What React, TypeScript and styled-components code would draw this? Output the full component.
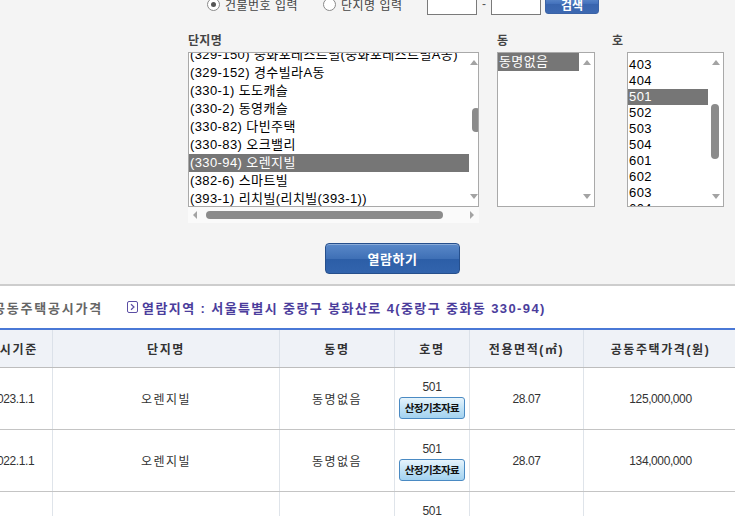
import React from 'react';
import styled, { createGlobalStyle } from 'styled-components';

const GlobalStyle = createGlobalStyle`
    html, body {
        margin: 0;
        padding: 0;
        background: #ffffff;
        overflow: hidden;
    }
    body {
        font-family: "Liberation Sans", "Noto Sans CJK KR", sans-serif;
        color: #333333;
    }
`;

const COLUMNS = '80px 227px 115px 75px 114px 154px';

const TopSection = styled.section`
    display: flex;
    flex-direction: column;
    background: #f4f4f4;
    border-bottom: 2px solid #cdcdcd;
    padding-bottom: 10px;
`;

const SearchRow = styled.div`
    display: flex;
    align-items: center;
    height: 22px;
    margin-top: -7px;
    padding-left: 207px;
`;

const RadioOption = styled.label<{ $width: number }>`
    display: flex;
    align-items: center;
    gap: 5px;
    width: ${p => p.$width}px;
    font-size: 12px;
    letter-spacing: 0.5px;
    color: #444444;
`;

const RadioMark = styled.span<{ $checked?: boolean }>`
    position: relative;
    width: 11px;
    height: 11px;
    border-radius: 50%;
    border: 1px solid #8a8a8a;
    background: #ffffff;

    &::after {
        content: '';
        display: ${p => (p.$checked ? 'block' : 'none')};
        position: absolute;
        left: 3px;
        top: 3px;
        width: 5px;
        height: 5px;
        border-radius: 50%;
        background: #555555;
    }
`;

const NumberInput = styled.input`
    width: 50px;
    height: 22px;
    box-sizing: border-box;
    border: 1px solid #7a7a7a;
    background: #ffffff;
    outline: none;
    padding: 0 3px;
`;

const Dash = styled.span`
    width: 14px;
    text-align: center;
    font-size: 12px;
    color: #555555;
`;

const SearchButton = styled.button`
    margin-left: 4px;
    width: 54px;
    height: 20px;
    border: 1px solid #3b63a6;
    border-radius: 3px;
    background: linear-gradient(#6d97d4, #4270bb 50%, #3864ae 51%, #3d69b2);
    color: #ffffff;
    font-family: inherit;
    font-size: 12px;
    font-weight: bold;
    padding: 0;
`;

const SelectArea = styled.div`
    display: flex;
    margin-top: 19px;
    padding-left: 188px;
`;

const SelectColumn = styled.div<{ $gap?: number }>`
    display: flex;
    flex-direction: column;
    margin-left: ${p => p.$gap ?? 0}px;
`;

const FieldLabel = styled.div`
    height: 14px;
    line-height: 14px;
    margin-bottom: 4px;
    font-size: 12px;
    font-weight: bold;
    letter-spacing: 0.3px;
    color: #444444;
`;

const ListBox = styled.div<{ $width: number; $indent?: number }>`
    display: flex;
    width: ${p => p.$width}px;
    height: 155px;
    margin-left: ${p => p.$indent ?? 0}px;
    box-sizing: border-box;
    border: 1px solid #a9a9a9;
    background: #ffffff;
    overflow: hidden;
`;

const ListItems = styled.div<{ $offset: number }>`
    flex: 1;
    min-width: 0;
    overflow: hidden;

    & > :first-child {
        margin-top: ${p => p.$offset}px;
    }
`;

const ListItem = styled.div<{ $height: number; $selected?: boolean }>`
    height: ${p => p.$height}px;
    line-height: ${p => p.$height}px;
    padding-left: 1px;
    font-size: 13px;
    letter-spacing: 0.4px;
    white-space: nowrap;
    color: ${p => (p.$selected ? '#ffffff' : '#000000')};
    background: ${p => (p.$selected ? '#767676' : 'transparent')};
`;

const VScroll = styled.div<{ $width: number }>`
    position: relative;
    display: flex;
    flex-direction: column;
    justify-content: space-between;
    align-items: center;
    width: ${p => p.$width}px;
    padding: 7px 0;
    box-sizing: border-box;
    background: #ffffff;
`;

const ArrowUp = styled.span`
    width: 0;
    height: 0;
    border-left: 4px solid transparent;
    border-right: 4px solid transparent;
    border-bottom: 5px solid #a3a3a3;
`;

const ArrowDown = styled.span`
    width: 0;
    height: 0;
    border-left: 4px solid transparent;
    border-right: 4px solid transparent;
    border-top: 5px solid #a3a3a3;
`;

const ScrollThumb = styled.span`
    position: absolute;
    border-radius: 4px;
    background: #8b8b8b;
`;

const HScroll = styled.div`
    position: relative;
    display: flex;
    justify-content: space-between;
    align-items: center;
    width: 291px;
    height: 16px;
    padding: 0 5px;
    box-sizing: border-box;
    background: #fafafa;
`;

const ArrowLeft = styled.span`
    width: 0;
    height: 0;
    border-top: 4px solid transparent;
    border-bottom: 4px solid transparent;
    border-right: 4px solid #a3a3a3;
`;

const ArrowRight = styled.span`
    width: 0;
    height: 0;
    border-top: 4px solid transparent;
    border-bottom: 4px solid transparent;
    border-left: 4px solid #a3a3a3;
`;

const ViewButton = styled.button`
    align-self: flex-start;
    margin: 20px 0 0 325px;
    width: 135px;
    height: 31px;
    border: 1px solid #264f8c;
    border-radius: 4px;
    background: linear-gradient(#5a89c9, #3f70b6 50%, #2c5ea7 52%, #3264ad);
    box-shadow: inset 0 1px 0 rgba(255, 255, 255, 0.3);
    color: #ffffff;
    font-family: inherit;
    font-size: 13px;
    font-weight: bold;
    letter-spacing: 0.5px;
    padding: 0;
`;

const ResultSection = styled.section`
    margin-left: -27px;
    width: 765px;
    background: #ffffff;
`;

const TitleRow = styled.div`
    display: flex;
    align-items: center;
    height: 42px;
    padding-left: 20px;
`;

const Title = styled.span`
    margin-right: 24px;
    font-size: 13px;
    font-weight: bold;
    letter-spacing: 1.8px;
    color: #666666;
    white-space: nowrap;
`;

const Address = styled.span`
    margin-left: 4px;
    font-size: 13px;
    font-weight: bold;
    letter-spacing: 1.4px;
    color: #4b3d9c;
    white-space: nowrap;
`;

const Table = styled.div`
    border-top: 2px solid #4a78d6;
`;

const HeaderRow = styled.div`
    display: grid;
    grid-template-columns: ${COLUMNS};
    height: 38px;
    box-sizing: border-box;
    background: #eff2f7;
    border-bottom: 1px solid #bdbdbd;
`;

const HeaderCell = styled.div`
    display: flex;
    align-items: center;
    justify-content: center;
    border-right: 1px solid #dbe1e9;
    font-size: 12px;
    font-weight: bold;
    letter-spacing: 1.6px;
    color: #333333;
    white-space: nowrap;
`;

const DataRow = styled.div`
    display: grid;
    grid-template-columns: ${COLUMNS};
    height: 62px;
    box-sizing: border-box;
    border-bottom: 1px solid #c4c4c4;
`;

const DataCell = styled.div<{ $stack?: boolean; $spacing?: number }>`
    display: flex;
    flex-direction: ${p => (p.$stack ? 'column' : 'row')};
    gap: ${p => (p.$stack ? 2 : 0)}px;
    align-items: center;
    justify-content: center;
    border-right: 1px solid #dfe4ea;
    font-size: 12px;
    letter-spacing: ${p => p.$spacing ?? -0.4}px;
    color: #333333;
    white-space: nowrap;
`;

const UnitNumber = styled.span`
    line-height: 16px;
`;

const BasisButton = styled.button`
    width: 66px;
    height: 22px;
    padding: 0;
    box-sizing: border-box;
    border: 1px solid #4a8ac3;
    border-radius: 3px;
    background: linear-gradient(#e6f4fc, #bfe1f5 55%, #a3d2f0);
    color: #111111;
    font-family: inherit;
    font-size: 10.5px;
    font-weight: bold;
    letter-spacing: -0.6px;
`;

const complexes = [
    '(329-150) 중화포레스트빌(중화포레스트빌A동)',
    '(329-152) 경수빌라A동',
    '(330-1) 도도캐슬',
    '(330-2) 동영캐슬',
    '(330-82) 다빈주택',
    '(330-83) 오크밸리',
    '(330-94) 오렌지빌',
    '(382-6) 스마트빌',
    '(393-1) 리치빌(리치빌(393-1))',
];

const units = ['403', '404', '501', '502', '503', '504', '601', '602', '603', '604'];

const headers = ['공시기준', '단지명', '동명', '호명', '전용면적(㎡)', '공동주택가격(원)'];

const prices = [
    { year: '2023.1.1', price: '125,000,000' },
    { year: '2022.1.1', price: '134,000,000' },
    { year: '2021.1.1', price: '129,000,000' },
];

const GoIcon = () => (
    <svg width="11" height="12" viewBox="0 0 11 12">
        <rect x="0.5" y="0.5" width="10" height="11" rx="1.5" fill="none" stroke="#5b4ea4" />
        <path d="M4 3.2 L7 6 L4 8.8" fill="none" stroke="#5b4ea4" strokeWidth="1.2" />
    </svg>
);

export default function App() {
    return (
        <>
            <GlobalStyle />
            <TopSection>
                <SearchRow>
                    <RadioOption $width={116}>
                        <RadioMark $checked />
                        건물번호 입력
                    </RadioOption>
                    <RadioOption $width={104}>
                        <RadioMark />
                        단지명 입력
                    </RadioOption>
                    <NumberInput />
                    <Dash>-</Dash>
                    <NumberInput />
                    <SearchButton>검색</SearchButton>
                </SearchRow>

                <SelectArea>
                    <SelectColumn>
                        <FieldLabel>단지명</FieldLabel>
                        <ListBox $width={291}>
                            <ListItems $offset={-7}>
                                {complexes.map(name => (
                                    <ListItem key={name} $height={18} $selected={name === '(330-94) 오렌지빌'}>
                                        {name}
                                    </ListItem>
                                ))}
                            </ListItems>
                            <VScroll $width={9}>
                                <ArrowUp />
                                <ScrollThumb style={{ left: 3, width: 8, top: 55, height: 24 }} />
                                <ArrowDown />
                            </VScroll>
                        </ListBox>
                        <HScroll>
                            <ArrowLeft />
                            <ScrollThumb style={{ left: 18, width: 237, top: 4, height: 8 }} />
                            <ArrowRight />
                        </HScroll>
                    </SelectColumn>

                    <SelectColumn $gap={18}>
                        <FieldLabel>동</FieldLabel>
                        <ListBox $width={98}>
                            <ListItems $offset={0}>
                                <ListItem $height={18} $selected>동명없음</ListItem>
                            </ListItems>
                            <VScroll $width={15}>
                                <ArrowUp />
                                <ArrowDown />
                            </VScroll>
                        </ListBox>
                    </SelectColumn>

                    <SelectColumn $gap={17}>
                        <FieldLabel>호</FieldLabel>
                        <ListBox $width={97} $indent={15}>
                            <ListItems $offset={4}>
                                {units.map(unit => (
                                    <ListItem key={unit} $height={16} $selected={unit === '501'}>
                                        {unit}
                                    </ListItem>
                                ))}
                            </ListItems>
                            <VScroll $width={15}>
                                <ArrowUp />
                                <ScrollThumb style={{ left: 3, width: 8, top: 51, height: 55 }} />
                                <ArrowDown />
                            </VScroll>
                        </ListBox>
                    </SelectColumn>
                </SelectArea>

                <ViewButton>열람하기</ViewButton>
            </TopSection>

            <ResultSection>
                <TitleRow>
                    <Title>공동주택공시가격</Title>
                    <GoIcon />
                    <Address>열람지역 : 서울특별시 중랑구 봉화산로 4(중랑구 중화동 330-94)</Address>
                </TitleRow>

                <Table>
                    <HeaderRow>
                        {headers.map(h => (
                            <HeaderCell key={h}>{h}</HeaderCell>
                        ))}
                    </HeaderRow>
                    {prices.map(row => (
                        <DataRow key={row.year}>
                            <DataCell>{row.year}</DataCell>
                            <DataCell $spacing={1.5}>오렌지빌</DataCell>
                            <DataCell $spacing={1.5}>동명없음</DataCell>
                            <DataCell $stack>
                                <UnitNumber>501</UnitNumber>
                                <BasisButton>산정기초자료</BasisButton>
                            </DataCell>
                            <DataCell>28.07</DataCell>
                            <DataCell>{row.price}</DataCell>
                        </DataRow>
                    ))}
                </Table>
            </ResultSection>
        </>
    );
}
